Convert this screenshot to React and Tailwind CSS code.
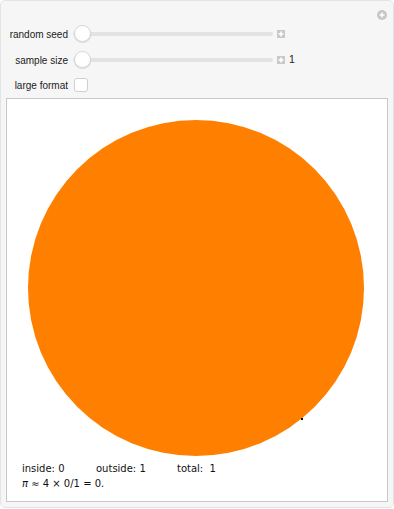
import React from "react";

function PlusBox() {
  return (
    <svg width="8" height="8" viewBox="0 0 8 8" className="block">
      <rect width="8" height="8" fill="#c9c9c9" />
      <path d="M4 1.5v5M1.5 4h5" stroke="#fff" strokeWidth="1.6" />
    </svg>
  );
}

function Slider({ label, value }) {
  return (
    <div className="flex items-center h-[26px]">
      <div className="w-[68px] pr-[1px] text-right text-[10px] text-[#222]">{label}</div>
      <div className="relative w-[200px] h-[4px] ml-[4px] rounded-full bg-[#e3e3e3]">
        <div className="absolute left-[1px] top-[-7px] w-[17px] h-[17px] rounded-full bg-white border border-[#d6d6d6] shadow-[0_1px_1px_rgba(0,0,0,0.12)]" />
      </div>
      <div className="ml-[4px]">
        <PlusBox />
      </div>
      {value != null && <span className="ml-[4px] text-[10.5px] text-[#222]">{value}</span>}
    </div>
  );
}

export default function App() {
  return (
    <div className="w-[394px] h-[509px] bg-white" style={{ fontFamily: '"Liberation Sans", Arial, sans-serif' }}>
      <div className="w-[394px] h-[508px] rounded-[5px] border border-[#e4e4e4] bg-[#f6f6f6] flex flex-col">
        <div className="flex justify-end pt-[9px] pr-[6px] h-[19px]">
          <svg width="10" height="10" viewBox="0 0 10 10">
            <circle cx="5" cy="5" r="5" fill="#c6c6c6" />
            <path d="M5 2.5v5M2.5 5h5" stroke="#fff" strokeWidth="1.5" />
          </svg>
        </div>
        <div className="flex flex-col mt-[1px]">
          <Slider label="random seed" />
          <Slider label="sample size" value="1" />
          <div className="flex items-center h-[24px]">
            <div className="w-[68px] pr-[1px] text-right text-[10px] text-[#222]">large format</div>
            <div className="ml-[5px] w-[14px] h-[14px] rounded-[3px] bg-white border border-[#cfcfcf]" />
          </div>
        </div>
        <div className="ml-[5px] mt-[1px] w-[382px] h-[404px] bg-white border border-[#c8c8c8] flex flex-col">
          <svg width="380" height="362" viewBox="0 0 380 362" className="shrink-0">
            <circle cx="189" cy="189" r="168" fill="#ff8000" />
            <rect x="294" y="319" width="2" height="2" fill="#000" />
          </svg>
          <div className="pl-[15px] text-[10px] text-[#111] leading-[15px]" style={{ fontFamily: '"DejaVu Sans", Verdana, sans-serif' }}>
            <div className="flex">
              <span className="w-[74px]">inside: 0</span>
              <span className="w-[81px]">outside: 1</span>
              <span>total:&nbsp; 1</span>
            </div>
            <div>
              <span className="italic">π</span> ≈ 4 × 0/1 = 0.
            </div>
          </div>
        </div>
      </div>
    </div>
  );
}
